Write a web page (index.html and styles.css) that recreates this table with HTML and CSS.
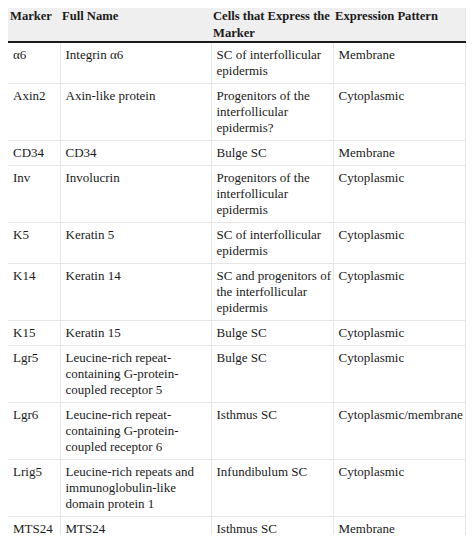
FILE: index.html
```html
<!DOCTYPE html>
<html>
<head>
<meta charset="utf-8">
<link rel="stylesheet" href="styles.css">
</head>
<body>
<div class="clip">
<table class="markers">
<colgroup>
<col class="c1"><col class="c2"><col class="c3"><col class="c4">
</colgroup>
<thead>
<tr><th>Marker</th><th>Full Name</th><th>Cells that Express the Marker</th><th>Expression Pattern</th></tr>
</thead>
<tbody>
<tr><td>α6</td><td>Integrin α6</td><td>SC of interfollicular epidermis</td><td>Membrane</td></tr>
<tr><td>Axin2</td><td>Axin-like protein</td><td>Progenitors of the interfollicular epidermis?</td><td>Cytoplasmic</td></tr>
<tr><td>CD34</td><td>CD34</td><td>Bulge SC</td><td>Membrane</td></tr>
<tr><td>Inv</td><td>Involucrin</td><td>Progenitors of the interfollicular epidermis</td><td>Cytoplasmic</td></tr>
<tr><td>K5</td><td>Keratin 5</td><td>SC of interfollicular epidermis</td><td>Cytoplasmic</td></tr>
<tr><td>K14</td><td>Keratin 14</td><td>SC and progenitors of the interfollicular epidermis</td><td>Cytoplasmic</td></tr>
<tr><td>K15</td><td>Keratin 15</td><td>Bulge SC</td><td>Cytoplasmic</td></tr>
<tr><td>Lgr5</td><td>Leucine-rich repeat-containing G-protein-coupled receptor 5</td><td>Bulge SC</td><td>Cytoplasmic</td></tr>
<tr><td>Lgr6</td><td>Leucine-rich repeat-containing G-protein-coupled receptor 6</td><td>Isthmus SC</td><td>Cytoplasmic/membrane</td></tr>
<tr><td>Lrig5</td><td>Leucine-rich repeats and immunoglobulin-like domain protein 1</td><td>Infundibulum SC</td><td>Cytoplasmic</td></tr>
<tr><td>MTS24</td><td>MTS24</td><td>Isthmus SC</td><td>Membrane</td></tr>
</tbody>
</table>
</div>
</body>
</html>
```

FILE: styles.css
```css
html, body {
  background: #ffffff;
}
body {
  margin: 8px;
  font-family: "Liberation Serif", "Times New Roman", serif;
  font-size: 13px;
  color: #1a1a1a;
}
.clip {
  height: 527px;
  overflow: hidden;
}
.markers {
  width: 457px;
  table-layout: fixed;
  border-collapse: collapse;
  border-right: 1px solid #e6e6e6;
}
.c1 { width: 52px; }
.c2 { width: 151px; }
.c3 { width: 122px; }
.c4 { width: 132px; }
.markers th {
  background: #efefef;
  font-weight: bold;
  font-size: 12.6px;
  text-align: left;
  vertical-align: top;
  line-height: 16.5px;
  padding: 0 1px 0 2px;
  border-bottom: 2px solid #1a1a1a;
}
.markers td {
  vertical-align: top;
  line-height: 16px;
  padding: 4px 1px 4px 5px;
  border: 1px solid #e6e6e6;
  border-top: none;
}
.markers td:first-child {
  border-left: none;
}
```
